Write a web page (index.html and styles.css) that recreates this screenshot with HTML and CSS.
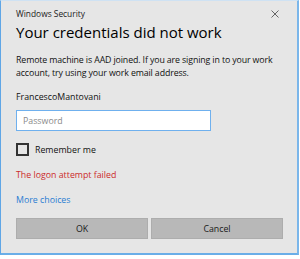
FILE: index.html
```html
<!DOCTYPE html>
<html>
<head>
<meta charset="utf-8">
<link rel="stylesheet" href="styles.css">
</head>
<body>
<div class="dialog">
  <div class="titlebar">
    <span class="title">Windows Security</span>
    <svg class="close" width="8" height="8" viewBox="0 0 8 8"><path d="M0.5 0.5 L7.5 7.5 M7.5 0.5 L0.5 7.5" stroke="#555" stroke-width="0.9" fill="none"/></svg>
  </div>
  <h1 class="heading">Your credentials did not work</h1>
  <p class="message">Remote machine is AAD joined. If you are signing in to your work account, try using your work email address.</p>
  <div class="user">FrancescoMantovani</div>
  <div class="input"><span class="placeholder">Password</span></div>
  <label class="remember"><span class="checkbox"></span><span>Remember me</span></label>
  <div class="error">The logon attempt failed</div>
  <div class="more">More choices</div>
  <div class="buttons">
    <div class="btn">OK</div>
    <div class="btn">Cancel</div>
  </div>
</div>
</body>
</html>
```
FILE: styles.css
```css
html, body {
  margin: 0;
  padding: 0;
  background: #ffffff;
}
body {
  width: 300px;
  height: 259px;
  font-family: "Open Sans", "Noto Sans", sans-serif;
  color: #111;
}
.dialog {
  box-sizing: border-box;
  width: 299px;
  height: 255px;
  background: #e6e6e6;
  border-left: 1px solid #5fa6e6;
  border-right: 2px solid #7ab6ea;
  border-bottom: 2px solid #6aaee8;
  border-top: 1px solid #cfe2f3;
  padding: 6px 14px 0 15px;
}
.titlebar {
  display: flex;
  justify-content: space-between;
  align-items: center;
  height: 13px;
}
.title {
  font-size: 8.4px;
  color: #1a1a1a;
}
.close {
  margin-right: 4px;
}
.heading {
  margin: 2px 0 0 0;
  font-weight: normal;
  font-size: 15px;
  line-height: 21px;
  color: #000;
}
.message {
  margin: 11px -12px 0 0;
  font-size: 8.8px;
  letter-spacing: -0.12px;
  line-height: 13px;
  color: #111;
}
.user {
  margin-top: 10px;
  font-size: 8.8px;
  line-height: 14px;
}
.input {
  box-sizing: border-box;
  margin-top: 6px;
  width: 195px;
  height: 21px;
  background: #fff;
  border: 1px solid #6fb0ee;
  display: flex;
  align-items: center;
  padding-left: 6px;
}
.placeholder {
  font-size: 8.8px;
  color: #8a8a8a;
}
.remember {
  margin-top: 12px;
  display: flex;
  align-items: center;
  gap: 6px;
  font-size: 8.8px;
  height: 13px;
}
.checkbox {
  box-sizing: border-box;
  width: 13px;
  height: 13px;
  border: 2px solid #333;
}
.error {
  margin-top: 12px;
  font-size: 8.8px;
  line-height: 14px;
  color: #cc2b2b;
}
.more {
  margin-top: 11px;
  font-size: 8.8px;
  line-height: 14px;
  color: #2a7dd2;
}
.buttons {
  margin-top: 11px;
  display: flex;
  gap: 3px;
}
.btn {
  box-sizing: border-box;
  width: 132px;
  height: 21px;
  background: #b8b8b8;
  border: 1px solid #adadad;
  font-size: 8.8px;
  display: flex;
  align-items: center;
  justify-content: center;
  color: #1a1a1a;
}
```
